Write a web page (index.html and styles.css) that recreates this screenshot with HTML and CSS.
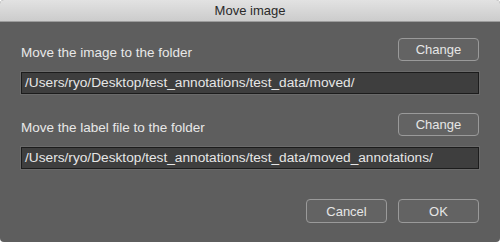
FILE: index.html
```html
<!DOCTYPE html>
<html lang="en">
<head>
  <meta charset="UTF-8">
  <title>Move image</title>
  <link rel="stylesheet" href="styles.css">
</head>
<body>
  <div class="dialog">
    <div class="titlebar">Move image</div>

    <div class="content">
      <div class="row">
        <span class="label">Move the image to the folder</span>
        <button class="btn">Change</button>
      </div>
      <div class="field">/Users/ryo/Desktop/test_annotations/test_data/moved/</div>

      <div class="row second">
        <span class="label">Move the label file to the folder</span>
        <button class="btn">Change</button>
      </div>
      <div class="field">/Users/ryo/Desktop/test_annotations/test_data/moved_annotations/</div>

      <div class="actions">
        <button class="btn">Cancel</button>
        <button class="btn">OK</button>
      </div>
    </div>
  </div>
</body>
</html>
```

FILE: styles.css
```css
body {
  margin: 0;
  background: #ffffff;
  font-family: 'Liberation Sans', Arial, sans-serif;
}

.dialog {
  width: 500px;
  height: 242px;
  background: #5e5e5e;
  border-radius: 4px;
  overflow: hidden;
}

.titlebar {
  height: 21px;
  line-height: 22px;
  text-align: center;
  font-size: 13px;
  color: #2a2a2a;
  background: linear-gradient(to bottom, #e2e2e2, #cccccc);
  border-bottom: 1px solid #9c9c9c;
}

.content {
  padding: 16px 21px 0;
}

.row {
  display: flex;
  justify-content: space-between;
  align-items: center;
  height: 23px;
}

.row.second {
  margin-top: 19px;
}

.label {
  padding-top: 5px;
  font-size: 13.5px;
  color: #e8e8e8;
}

.field {
  margin-top: 11px;
  height: 20px;
  line-height: 20px;
  padding-left: 3px;
  background: #3e3e3e;
  border: 1px solid #1c1c1c;
  box-shadow: 0 0 0 1px #6a6a6a;
  color: #e6e6e6;
  font-size: 13.7px;
}

.btn {
  width: 81px;
  height: 23px;
  padding: 0;
  border: 1px solid #9a9a9a;
  border-radius: 4px;
  background: #636363;
  color: #e6e6e6;
  font-family: inherit;
  font-size: 13px;
}

.actions {
  display: flex;
  justify-content: flex-end;
  gap: 11px;
  margin-top: 30px;
}

.actions .btn {
  height: 24px;
}
```
